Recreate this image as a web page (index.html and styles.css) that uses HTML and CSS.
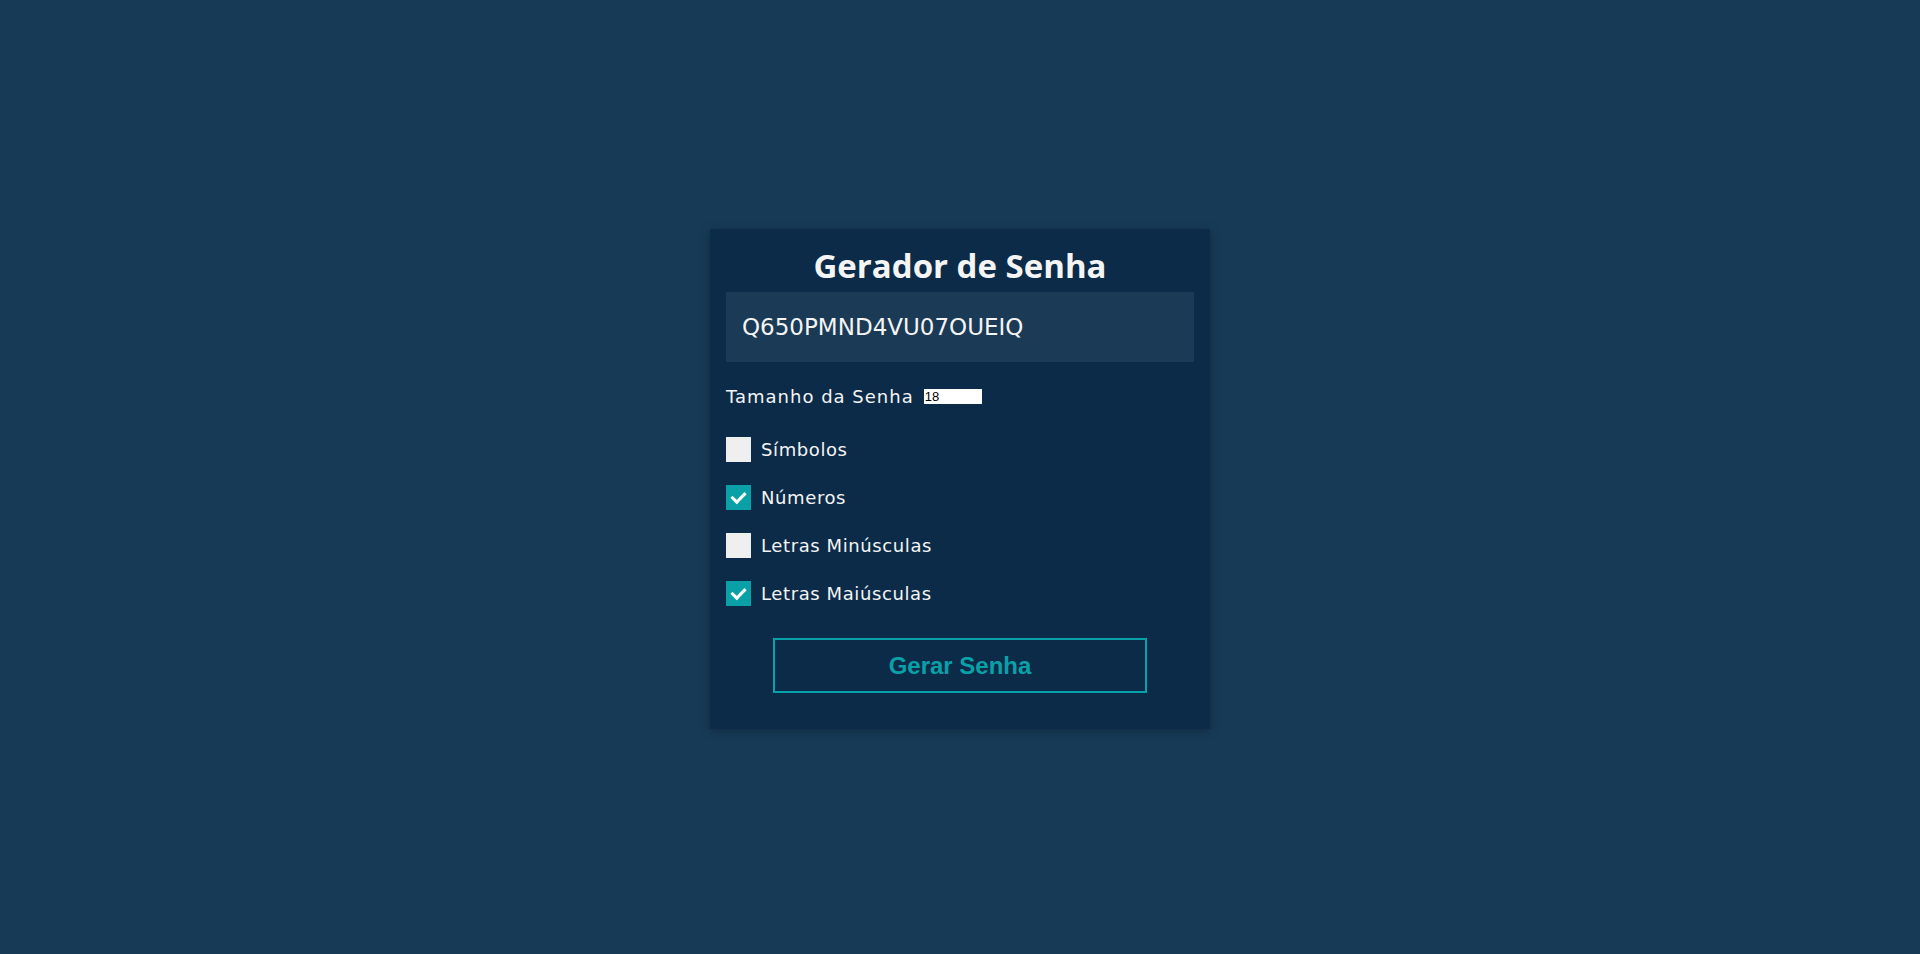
FILE: index.html
```html
<!DOCTYPE html>
<html lang="pt-BR">
<head>
    <meta charset="UTF-8">
    <meta name="viewport" content="width=device-width, initial-scale=1.0">
    <title>Gerador de Senha</title>
    <link rel="stylesheet" href="styles.css">
</head>
<body>
    <main class="card">
        <h1 class="title">Gerador de Senha</h1>
        <div class="result">Q650PMND4VU07OUEIQ</div>

        <div class="length-row">
            <label for="length">Tamanho da Senha</label>
            <input type="number" id="length" value="18" min="4" max="30">
        </div>

        <div class="options">
            <label class="option">
                <input type="checkbox" id="symbols">
                <span>Símbolos</span>
            </label>
            <label class="option">
                <input type="checkbox" id="numbers" checked>
                <span>Números</span>
            </label>
            <label class="option">
                <input type="checkbox" id="lowercase">
                <span>Letras Minúsculas</span>
            </label>
            <label class="option">
                <input type="checkbox" id="uppercase" checked>
                <span>Letras Maiúsculas</span>
            </label>
        </div>

        <button class="generate" type="button">Gerar Senha</button>
    </main>
</body>
</html>
```

FILE: styles.css
```css
* {
    box-sizing: border-box;
}
body {
    margin: 0;
    min-height: 100vh;
    background: #173b57;
    font-family: "DejaVu Sans", "Noto Sans", sans-serif;
    color: #f4f4f4;
    display: flex;
    align-items: center;
    justify-content: center;
}
.card {
    width: 500px;
    height: 500px;
    margin-top: 4px;
    background: #0b2b48;
    padding: 14px 16px 36px;
    box-shadow: 0 2px 10px rgba(0, 0, 0, 0.3);
    display: flex;
    flex-direction: column;
}
.title {
    margin: 0;
    text-align: center;
    font-family: "Open Sans", sans-serif;
    font-size: 33px;
    font-weight: 700;
    line-height: 46px;
    color: #f4f4f4;
}
.result {
    height: 70px;
    margin-top: 3px;
    background: #1a3a55;
    padding: 0 16px;
    display: flex;
    align-items: center;
    font-size: 23px;
}
.length-row {
    display: flex;
    align-items: center;
    gap: 10px;
    margin-top: 24px;
    font-size: 18px;
    letter-spacing: 1px;
}
.length-row input {
    width: 58px;
    height: 15px;
    border: none;
    padding: 0 1px;
    font-family: "Liberation Sans", Arial, sans-serif;
    font-size: 13px;
    letter-spacing: 0;
    background: #fff;
    color: #000;
}
.options {
    display: flex;
    flex-direction: column;
    gap: 23px;
    margin-top: 30px;
}
.option {
    display: flex;
    align-items: center;
    gap: 10px;
    font-size: 18px;
    letter-spacing: 0.6px;
    height: 25px;
}
.option input {
    appearance: none;
    -webkit-appearance: none;
    margin: 0;
    width: 25px;
    height: 25px;
    background: #efefef;
    position: relative;
    cursor: pointer;
}
.option input:checked {
    background: #0aa0a8;
}
.option input:checked::after {
    content: "";
    position: absolute;
    left: 8px;
    top: 4px;
    width: 6px;
    height: 11px;
    border: solid #fff;
    border-width: 0 3px 3px 0;
    transform: rotate(45deg);
}
.generate {
    align-self: center;
    width: 80%;
    height: 55px;
    margin-top: 32px;
    background: transparent;
    border: 2px solid #0aa0a8;
    color: #0aa0a8;
    font-family: "Liberation Sans", Arial, sans-serif;
    font-weight: 700;
    font-size: 24px;
    cursor: pointer;
}
```
